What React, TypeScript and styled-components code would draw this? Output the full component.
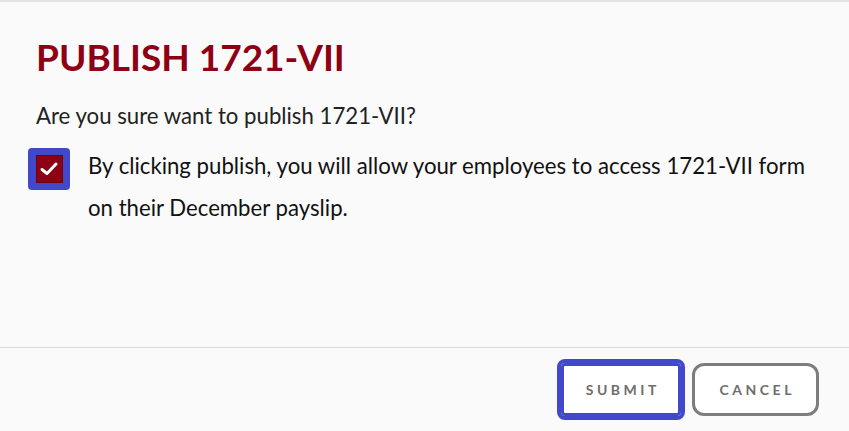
import styled, { createGlobalStyle } from "styled-components";

const GlobalStyle = createGlobalStyle`
	html, body {
		margin: 0;
		padding: 0;
		background: #fafafa;
	}
	body {
		font-family: Lato, "Open Sans", sans-serif;
	}
`;

function CheckIcon()
{
	return (
		<svg width="20" height="16" viewBox="0 0 20 16" fill="none">
			<path d="M3 8.5 L8 12.5 L17 3" stroke="#fff" strokeWidth="3" strokeLinecap="round" strokeLinejoin="round" />
		</svg>
	);
}

function App()
{
	return (
		<>
			<GlobalStyle />
			<Modal>
				<ModalBody>
					<Title>PUBLISH 1721-VII</Title>
					<Question>Are you sure want to publish 1721-VII?</Question>
					<ConsentRow>
						<CheckboxFocus>
							<CheckboxBox>
								<CheckIcon />
							</CheckboxBox>
						</CheckboxFocus>
						<ConsentText>
							By clicking publish, you will allow your employees to access 1721-VII form on their December payslip.
						</ConsentText>
					</ConsentRow>
				</ModalBody>

				<ModalFooter>
					<Button focused width={120}>SUBMIT</Button>
					<Button width={127}>CANCEL</Button>
				</ModalFooter>
			</Modal>
		</>
	);
}

export default App;

const Modal = styled.div`
	width: 849px;
	height: 431px;
	display: flex;
	flex-direction: column;
	border-top: 2px solid #e3e3e3;
	box-sizing: border-box;
	background: #fafafa;
`;

const ModalBody = styled.div`
	flex: 1;
	padding: 33px 36px 0 36px;
	border-bottom: 1px solid #dcdcdc;
`;

const Title = styled.h1`
	margin: 0;
	font-size: 37px;
	font-weight: 700;
	color: #8e0014;
	line-height: 44px;
`;

const Question = styled.p`
	margin: 22px 0 0 0;
	font-size: 22.2px;
	line-height: 30px;
	color: #222;
`;

const ConsentRow = styled.div`
	display: flex;
	align-items: flex-start;
	gap: 18px;
	margin-top: 17px;
	margin-left: -8px;
`;

const CheckboxFocus = styled.div`
	flex: none;
	width: 42px;
	height: 42px;
	border-radius: 4px;
	background: #4148c9;
	display: flex;
	align-items: center;
	justify-content: center;
`;

const CheckboxBox = styled.div`
	width: 27px;
	height: 28px;
	background: #8e0014;
	border: 1px solid #6e0010;
	box-sizing: border-box;
	display: flex;
	align-items: center;
	justify-content: center;
`;

const ConsentText = styled.p`
	margin: 0;
	font-size: 22.2px;
	line-height: 42px;
	color: #111;
	max-width: 728px;
	position: relative;
	top: -3px;
`;

const ModalFooter = styled.div`
	height: 83px;
	display: flex;
	align-items: center;
	justify-content: flex-end;
	gap: 11px;
	padding-right: 30px;
`;

const Button = styled.button<{ focused?: boolean; width: number }>`
	width: ${p => p.width}px;
	height: 53px;
	padding: 0;
	border-radius: ${p => (p.focused ? "4px" : "12px")};
	border: 3px solid ${p => (p.focused ? "#4148c9" : "#7d7d7d")};
	outline: ${p => (p.focused ? "4px solid #4148c9" : "none")};
	background: #fff;
	font-family: Lato, sans-serif;
	font-size: 14px;
	font-weight: 700;
	letter-spacing: 3.5px;
	text-indent: 3.5px;
	color: #6e6e6e;
	cursor: pointer;
	box-sizing: border-box;
`;
